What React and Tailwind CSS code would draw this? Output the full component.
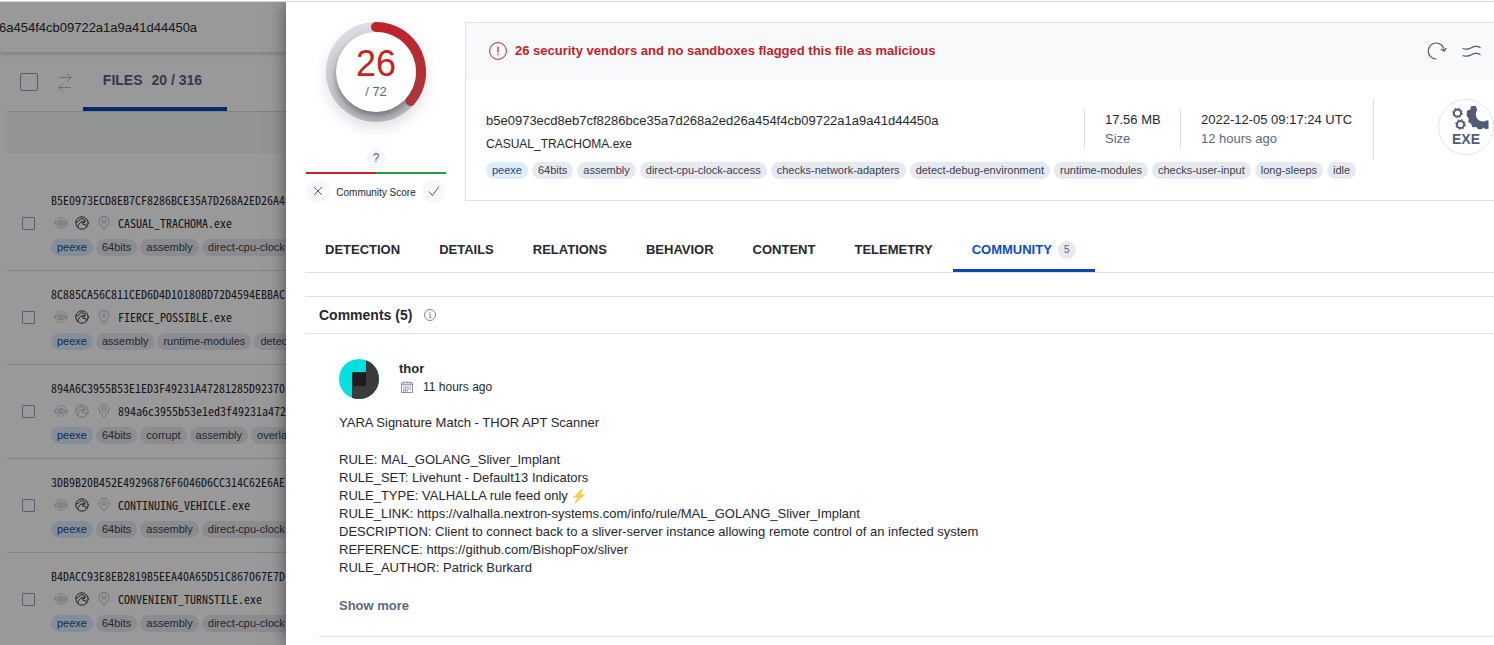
import React, { useState } from "react";
import clsx from "clsx";

const HASH = "b5e0973ecd8eb7cf8286bce35a7d268a2ed26a454f4cb09722a1a9a41d44450a";

const FILES = [
    {
        hash: "B5E0973ECD8EB7CF8286BCE35A7D268A2ED26A4",
        name: "CASUAL_TRACHOMA.exe",
        flagged: true,
        tags: ["peexe", "64bits", "assembly", "direct-cpu-clock"],
    },
    {
        hash: "8C885CA56C811CED6D4D10180BD72D4594EBBAC",
        name: "FIERCE_POSSIBLE.exe",
        flagged: true,
        tags: ["peexe", "assembly", "runtime-modules", "detec"],
    },
    {
        hash: "894A6C3955B53E1ED3F49231A47281285D92370",
        name: "894a6c3955b53e1ed3f49231a472",
        flagged: false,
        tags: ["peexe", "64bits", "corrupt", "assembly", "overla"],
    },
    {
        hash: "3DB9B20B452E49296876F6046D6CC314C62E6AE",
        name: "CONTINUING_VEHICLE.exe",
        flagged: true,
        tags: ["peexe", "64bits", "assembly", "direct-cpu-clock"],
    },
    {
        hash: "B4DACC93E8EB2819B5EEA40A65D51C867067E7D",
        name: "CONVENIENT_TURNSTILE.exe",
        flagged: true,
        tags: ["peexe", "64bits", "assembly", "direct-cpu-clock"],
    },
];

const FILE_TAGS = [
    "peexe",
    "64bits",
    "assembly",
    "direct-cpu-clock-access",
    "checks-network-adapters",
    "detect-debug-environment",
    "runtime-modules",
    "checks-user-input",
    "long-sleeps",
    "idle",
];

const TABS = ["DETECTION", "DETAILS", "RELATIONS", "BEHAVIOR", "CONTENT", "TELEMETRY", "COMMUNITY"];

const RULE_LINES = [
    "RULE: MAL_GOLANG_Sliver_Implant",
    "RULE_SET: Livehunt - Default13 Indicators",
    "RULE_TYPE: VALHALLA rule feed only",
    "RULE_LINK: https://valhalla.nextron-systems.com/info/rule/MAL_GOLANG_Sliver_Implant",
    "DESCRIPTION: Client to connect back to a sliver-server instance allowing remote control of an infected system",
    "REFERENCE: https://github.com/BishopFox/sliver",
    "RULE_AUTHOR: Patrick Burkard",
];

const Tag = ({ label }) => (
    <span
        className={clsx(
            "h-[17px] px-[6px] rounded-full text-[11px] leading-4 whitespace-nowrap shrink-0",
            label === "peexe" ? "bg-[#dcedfd] text-[#1d4a80]" : "bg-[#e7e9f0] text-[#3a3f4e]"
        )}
    >
        {label}
    </span>
);

const SandboxIcon = () => (
    <svg viewBox="0 0 14 14" className="size-[14px] text-[#b9bdc8]" fill="none" stroke="currentColor">
        <circle cx="7" cy="7" r="5.3" strokeDasharray="2.6 0.8" />
        <rect x="3.8" y="4.8" width="6.4" height="4.6" rx="1.5" />
        <circle cx="7" cy="7" r="1.3" />
        <path d="M1 5.5v3M13 5.5v3" />
    </svg>
);

const VendorIcon = ({ active }) => (
    <svg
        viewBox="0 0 14 14"
        className={clsx("size-[14px]", active ? "text-[#33363f]" : "text-[#b9bdc8]")}
        fill="none"
        stroke="currentColor"
        strokeLinecap="round"
    >
        <circle cx="7" cy="7" r="6.2" />
        <path d="M1.2 5.8C3.4 5.800 4.600 4.800 5.200 3.200c1.400-.8 3.600-.4 5.400 1.400M3 11c.2-2.400 1.400-4.400 3.800-5.200M7 5.800l1 2.600 2.600 0 .8 2.400" />
        <circle cx="9" cy="5.8" r="0.8" />
    </svg>
);

const PinIcon = () => (
    <svg viewBox="0 0 12 14" className="w-3 h-[14px] text-[#b9bdc8]" fill="none" stroke="currentColor">
        <path d="M6 13.2C3.6 10.4 1 7.9 1 5.4a5 5 0 0 1 10 0c0 2.5-2.6 5-5 7.8z" />
        <circle cx="6" cy="5.3" r="1.8" />
    </svg>
);

const SwapIcon = () => (
    <svg viewBox="0 0 14 20" className="w-[14px] h-5" fill="none" stroke="currentColor">
        <path d="M1 5.5h12M9 1l4 4.5L9 10M13 15.5H1M5 11.5l-4 4 4 4" />
    </svg>
);

const ScoreGauge = () => (
    <div className="relative size-[100px] rounded-full shadow-[0_6px_14px_rgba(60,65,80,0.16)]">
        <svg viewBox="0 0 100 100" className="size-full">
            <defs>
                <linearGradient id="ring" x1="0.4" y1="0" x2="0.55" y2="1">
                    <stop offset="0" stopColor="#dcdee4" />
                    <stop offset="0.45" stopColor="#cccdd3" />
                    <stop offset="1" stopColor="#b4b6bd" />
                </linearGradient>
                <linearGradient id="arc" x1="0" y1="0" x2="0" y2="1">
                    <stop offset="0" stopColor="#c0232b" />
                    <stop offset="1" stopColor="#a9383d" />
                </linearGradient>
                <filter id="soft" x="-30%" y="-30%" width="160%" height="160%">
                    <feGaussianBlur stdDeviation="3.5" />
                </filter>
                <clipPath id="disc">
                    <circle cx="50" cy="50" r="50" />
                </clipPath>
            </defs>
            <circle cx="50" cy="50" r="50" fill="url(#ring)" />
            <g clipPath="url(#disc)">
                <circle cx="50" cy="54" r="40" fill="#4a4c52" fillOpacity="0.65" filter="url(#soft)" />
            </g>
            <path d="M50 5A45 45 0 0 1 84.5 79" fill="none" stroke="url(#arc)" strokeWidth="10" strokeLinecap="round" />
            <circle cx="50" cy="50" r="40" fill="#fff" />
        </svg>
        <div className="absolute inset-0 flex flex-col items-center pt-6">
            <span className="text-4xl leading-9 text-[#c5221f]">26</span>
            <span className="mt-[2px] text-[13px] leading-4 text-[#5b6785]">/ 72</span>
        </div>
    </div>
);

const ExeBadge = () => (
    <div className="size-14 shrink-0 rounded-full border border-[#e2e4ec] bg-white flex flex-col items-center pt-[5px] text-[#4f5b78]">
        <svg viewBox="0 0 37 25" className="w-[37px] h-[25px] ml-2" fill="none">
            <circle cx="5.5" cy="8" r="3.6" stroke="currentColor" strokeWidth="2" />
            <circle cx="5.5" cy="8" r="5" stroke="currentColor" strokeWidth="0.8" strokeDasharray="2 1.9" />
            <circle cx="8.5" cy="19.5" r="3.6" stroke="currentColor" strokeWidth="2" />
            <circle cx="8.5" cy="19.5" r="5" stroke="currentColor" strokeWidth="0.8" strokeDasharray="2 1.9" />
            <path
                fill="currentColor"
                d="M15 5.500l3.200-.8.8-3.500 4.600-.4 1.600 4.200c-2 2.600-1.800 6.500.2 9 2.200 2.700 6.300 3.400 9.600 1.200l1.500.6v8l-3.300.2-1.600-1.400-2 1.600h-3.600l-1.600-2.200-4 .2-1.400-3.600-2.800-1.600.6-3.600-2.200-2.400z"
            />
        </svg>
        <span className="mt-[2px] text-sm leading-[14px] font-bold">EXE</span>
    </div>
);

const FileRow = ({ file }) => (
    <li className="flex items-center h-[94px] ml-[7px] pl-[15px] border-b border-[#d9dbe3]">
        <input
            type="checkbox"
            aria-label={file.name}
            className="appearance-none size-[13px] shrink-0 rounded-[1px] border border-[#939ebc]"
        />
        <div className="ml-4 text-[#26282f]">
            <div className="h-4 font-['Noto_Sans_Mono_CJK_SC','Liberation_Mono',monospace] text-xs leading-4 whitespace-nowrap">
                {file.hash}
            </div>
            <div className="flex items-center h-5 mt-[5px] pl-[3px]">
                <SandboxIcon />
                <span className="ml-[7px]"><VendorIcon active={file.flagged} /></span>
                <span className="ml-[9px]"><PinIcon /></span>
                <span className="ml-2 font-['Noto_Sans_Mono_CJK_SC','Liberation_Mono',monospace] text-xs leading-5 whitespace-nowrap">
                    {file.name}
                </span>
            </div>
            <div className="flex gap-[3px] mt-[6px]">
                {file.tags.map((t) => <Tag key={t} label={t} />)}
            </div>
        </div>
    </li>
);

const ResultsPane = () => (
    <aside className="relative w-[286px] shrink-0 overflow-hidden bg-white">
        <div className="h-[51px] flex items-center pt-px border-b border-[#dfe1e8] shadow-[0_1px_4px_rgba(0,0,0,0.2)]">
            <input
                type="text"
                aria-label="Search"
                defaultValue="6a454f4cb09722a1a9a41d44450a"
                className="w-full -ml-px text-[13px] text-[#26282f]"
            />
        </div>

        <div className="flex h-[59px] ml-[7px] border-b border-[#d9dbe3]">
            <input
                type="checkbox"
                aria-label="Select all"
                className="appearance-none size-[18px] mt-5 ml-[13px] rounded-[2px] border border-[#8e99b8]"
            />
            <button type="button" aria-label="Swap" className="self-start mt-[19px] ml-[20px] text-[#b4b9c6]">
                <SwapIcon />
            </button>
            <button
                type="button"
                className="w-36 h-[58px] ml-[11px] pr-[5px] pb-px flex items-center justify-center gap-[9px] border-b-4 border-[#0b45b8] text-sm font-bold text-[#5b6080]"
            >
                <span>FILES</span>
                <span>20 / 316</span>
            </button>
        </div>
        <div className="h-[42px] ml-[7px] bg-[#f6f7f7]" />

        <ul className="mt-[23px]">
            {FILES.map((f) => <FileRow key={f.hash} file={f} />)}
        </ul>

        <div className="absolute inset-0 bg-black/40 pointer-events-none" />
    </aside>
);

const CommunityScore = () => (
    <div className="w-[140px] shrink-0 flex flex-col items-center">
        <ScoreGauge />
        <span className="size-5 mt-[26px] rounded-full bg-[#f7f8fb] text-xs leading-5 text-center text-[#4f5b78]">?</span>
        <div className="flex w-full h-[2px] mt-1">
            <div className="flex-1 bg-[#c0232b]" />
            <div className="flex-1 bg-[#1f9d49]" />
        </div>
        <div className="flex items-center justify-between w-full mt-[5px]">
            <button type="button" aria-label="Vote down" className="size-6 rounded-full bg-[#f7f8fb] flex items-center justify-center text-[#4f5b78]">
                <svg viewBox="0 0 10 10" className="size-[10px]" stroke="currentColor">
                    <path d="M1 1l8 8M9 1L1 9" />
                </svg>
            </button>
            <span className="mt-1 text-[10px] leading-4 text-[#26282f] whitespace-nowrap">Community Score</span>
            <button type="button" aria-label="Vote up" className="size-6 rounded-full bg-[#f7f8fb] flex items-center justify-center text-[#4f5b78]">
                <svg viewBox="0 0 12 10" className="w-3 h-[10px]" fill="none" stroke="currentColor">
                    <path d="M1 5.500l3.500 4L11 .5" />
                </svg>
            </button>
        </div>
    </div>
);

const SummaryCard = () => (
    <section className="flex-1 min-w-0 h-[179px] border border-r-0 border-[#e0e2e8]">
        <div className="flex items-center h-14 pl-[23px] pr-[13px] bg-[#f7f9fa]">
            <svg viewBox="0 0 18 18" className="size-[18px]" fill="none" stroke="#c5221f">
                <circle cx="9" cy="9" r="8.400" />
                <path d="M9 4.500v6M9 11.800v1.400" strokeWidth="1.200" />
            </svg>
            <h1 className="ml-2 text-[13px] leading-4 font-bold text-[#c0232b]">
                26 security vendors and no sandboxes flagged this file as malicious
            </h1>
            <div className="ml-auto flex items-center gap-[15px] text-[#4f5668]">
                <button type="button" aria-label="Reanalyze">
                    <svg viewBox="0 0 20 18" className="w-5 h-[18px] block" fill="none" stroke="currentColor" strokeWidth="1.200">
                        <path d="M9.500 17A8 8 0 1 1 17.200 8.500" />
                        <path d="M13.800 7l3.400 2.200L19.400 6" />
                    </svg>
                </button>
                <button type="button" aria-label="Similar files">
                    <svg viewBox="0 0 19 12" className="w-[19px] h-3 block" fill="none" stroke="currentColor" strokeWidth="1.200">
                        <path d="M.5 3.500c3 1.200 6 .8 9-.8s6-1.800 9 0M.5 10.500c3 1.200 6 .8 9-.8s6-1.800 9 0" />
                    </svg>
                </button>
            </div>
        </div>

        <div className="flex items-start pl-5 pt-5">
            <div className="flex-1 min-w-0">
                <div className="flex text-[13px] text-[#26282f]">
                    <div className="flex-1 min-w-0 pt-[14px]">
                        <p className="leading-4 truncate">{HASH}</p>
                        <p className="text-xs leading-4 mt-[7px]">CASUAL_TRACHOMA.exe</p>
                    </div>
                    <div className="h-10 mt-[10px] w-24 pl-5 pt-px border-l border-[#dcdee6]">
                        <p className="leading-5">17.56 MB</p>
                        <p className="leading-[18px] text-[#5b6785]">Size</p>
                    </div>
                    <div className="h-10 mt-[10px] w-[193px] pl-5 pt-px border-l border-[#dcdee6]">
                        <p className="leading-5">2022-12-05 09:17:24 UTC</p>
                        <p className="leading-[18px] text-[#5b6785]">12 hours ago</p>
                    </div>
                </div>
                <div className="flex gap-1 mt-[10px]">
                    {FILE_TAGS.map((t) => <Tag key={t} label={t} />)}
                </div>
            </div>
            <div className="flex justify-end items-start w-[121px] h-[61px] border-l border-[#dcdee6]">
                <ExeBadge />
            </div>
        </div>
    </section>
);

const Comment = () => (
    <article className="ml-[13px] pt-[25px] pl-5 pb-[21px] border-b border-[#e0e2e8] text-[13px] text-[#26282f]">
        <div className="flex items-start">
            <svg viewBox="0 0 40 40" className="size-10">
                <clipPath id="avatar">
                    <circle cx="20" cy="20" r="20" />
                </clipPath>
                <g clipPath="url(#avatar)">
                    <path fill="#00e0e3" d="M0 0h40v40H0z" />
                    <path fill="#3b3b3b" d="M27 0h13v40H13V13h14z" />
                    <path fill="#1e1e1e" d="M13.500 13.500h13.500v13.500H13.500z" />
                </g>
            </svg>
            <div className="ml-5 pt-px">
                <p className="leading-[18px] font-bold">thor</p>
                <div className="flex items-center text-xs leading-[18px]">
                    <svg viewBox="0 0 12 12" className="size-3 ml-[2px] mr-[10px] text-[#6b7488]" fill="none" stroke="currentColor" strokeWidth="0.8">
                        <path d="M.5 1.800h11v9.700H.5zM3 .3v2M6 .3v2M9 .3v2M.5 3.700h11" />
                        <path d="M2.200 6h7.600M2.200 8h7.600M2.200 9.800h5" strokeDasharray="1.200 0.500" strokeWidth="1.200" />
                    </svg>
                    <span>11 hours ago</span>
                </div>
            </div>
        </div>

        <p className="mt-[15px] leading-[18px]">YARA Signature Match - THOR APT Scanner</p>
        <div className="mt-[19px]">
            {RULE_LINES.map((line) => (
                <p key={line} className="flex items-center leading-[18px]">
                    {line}
                    {line.startsWith("RULE_TYPE") && (
                        <svg viewBox="0 0 14 16" className="w-[14px] h-4 ml-1">
                            <path fill="#fbd04b" stroke="#f3b62c" strokeWidth="0.6" d="M10.500 1L1.500 9.300l4.600-.6L3 15.200l9.700-8.600-4.800.7z" />
                        </svg>
                    )}
                </p>
            ))}
        </div>
        <button type="button" className="block mt-5 leading-[18px] font-bold text-[#5b6785]">
            Show more
        </button>
    </article>
);

const App = () => {

    const [tab, setTab] = useState("COMMUNITY");

    return (
        <div className="flex flex-col h-screen overflow-hidden pt-px bg-white font-['Liberation_Sans',Arial,sans-serif]">
            <div className="flex flex-1 min-h-0 overflow-hidden border-t border-[#d5d6da]">
                <ResultsPane />

                <main className="relative flex-1 min-w-0 pl-5 pt-5 bg-white shadow-[0_0_16px_rgba(0,0,0,0.5)]">
                    <div className="flex items-start gap-[19px]">
                        <CommunityScore />
                        <SummaryCard />
                    </div>

                    {/* tabs */}
                    <nav className="flex gap-px mt-[25px] h-[45px] border-b border-[#e0e2e8]">
                        {TABS.map((name) => (
                            <button
                                key={name}
                                type="button"
                                onClick={() => setTab(name)}
                                className={clsx(
                                    "flex items-center gap-[6px] px-[19px] pt-[2px] border-b-3 text-[13px] font-bold",
                                    tab === name ? "border-[#0b45b8] text-[#0b4dca]" : "border-transparent text-[#26282f]"
                                )}
                            >
                                {name}
                                {name === "COMMUNITY" && (
                                    <span className="size-[18px] rounded-full bg-[#e7e9f0] text-[10px] leading-[18px] font-normal text-[#5a5f6e]">
                                        5
                                    </span>
                                )}
                            </button>
                        ))}
                    </nav>

                    {/* comments */}
                    <div className="flex items-center h-[38px] mt-[23px] pl-[13px] border-y border-[#e0e2e8]">
                        <h2 className="text-sm font-bold text-[#26282f]">Comments (5)</h2>
                        <svg viewBox="0 0 12 12" className="size-3 ml-3 text-[#5f6675]" fill="none" stroke="currentColor" strokeWidth="0.8">
                            <circle cx="6" cy="6" r="5.500" />
                            <path d="M6 3v1M5 5.300h1.200v3.200M4.900 8.700h2.400" />
                        </svg>
                    </div>
                    <Comment />
                </main>
            </div>
        </div>
    );
};

export default App;
